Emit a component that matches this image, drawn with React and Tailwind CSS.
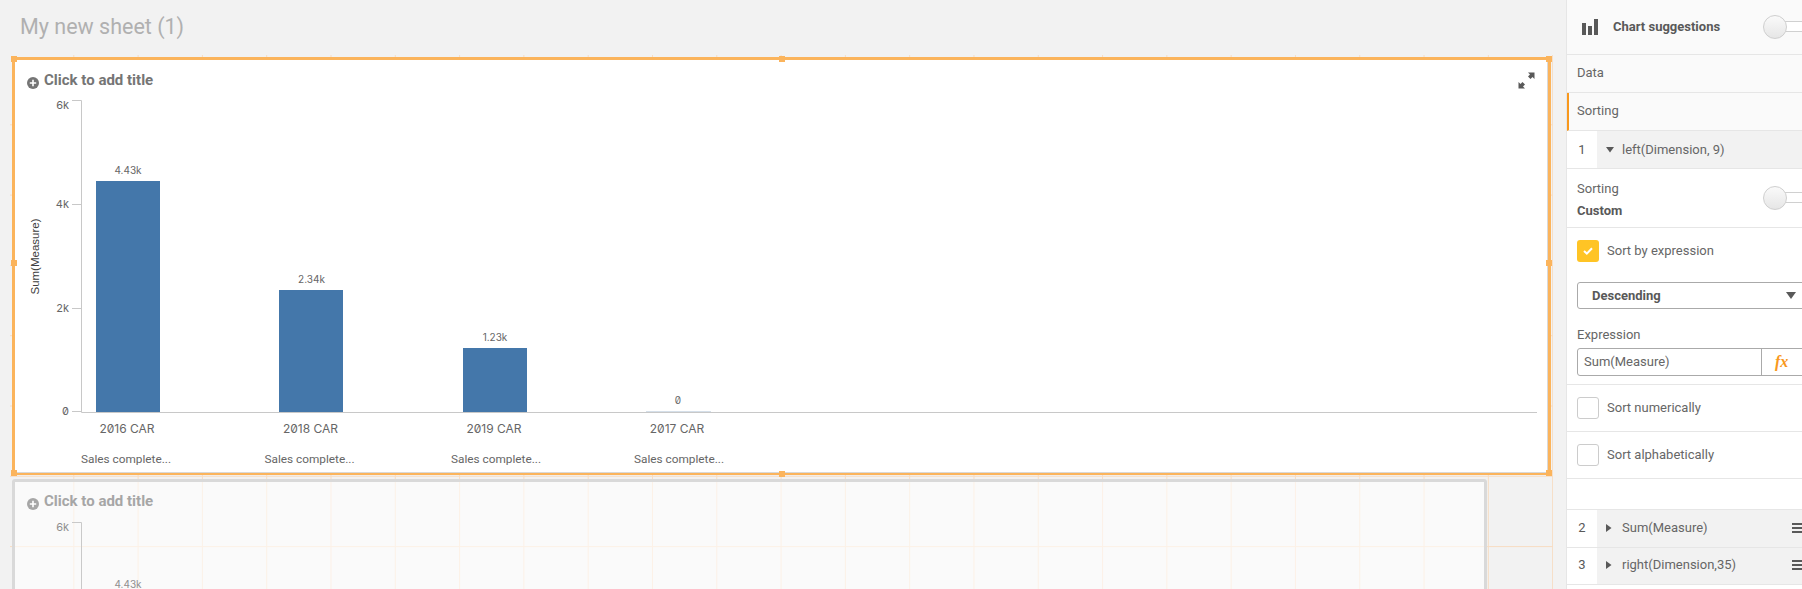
import React from "react";

const sans = "font-['Roboto',sans-serif]";

function Chart() {
  const axis = "#c8c8c8";
  const text = "#666666";
  const bars = [
    { x: 96, top: 181, label: "4.43k", year: "2016 CAR", cx: 128, sx: 126 },
    { x: 279, top: 290, label: "2.34k", year: "2018 CAR", cx: 311.5, sx: 309.5 },
    { x: 463, top: 348, label: "1.23k", year: "2019 CAR", cx: 495, sx: 496 },
  ];
  const ticks = [
    { y: 204, l: "4k" },
    { y: 308, l: "2k" },
    { y: 411, l: "0" },
  ];
  return (
    <svg viewBox="15 90 1533 382" width="1533" height="382" className="block slashed-zero font-['Inter',sans-serif]">
      <path d="M72 100.5H81.5V412.5H1537" fill="none" stroke={axis} strokeWidth="1" />
      {ticks.map((t) => (
        <g key={t.l}>
          <path d={`M72 ${t.y + 0.5}H81`} stroke={axis} />
          <text x="69" y={t.y + 4} textAnchor="end" fontSize="11" fill={text}>{t.l}</text>
        </g>
      ))}
      <text x="69" y="109" textAnchor="end" fontSize="11" fill={text}>6k</text>
      <text transform="rotate(-90 39 256.5)" x="39" y="256.5" textAnchor="middle" fontSize="11.5" fill="#404040" className="font-['Liberation_Sans',sans-serif]">Sum(Measure)</text>
      {bars.map((b) => (
        <g key={b.year}>
          <rect x={b.x} y={b.top} width="64" height={412 - b.top} fill="#4477aa" />
          <text x={b.cx} y={b.top - 7} textAnchor="middle" fontSize="10" fill={text}>{b.label}</text>
          <text x={b.cx - 1} y="433" textAnchor="middle" fontSize="12" fill={text}>{b.year}</text>
          <text x={b.sx} y="463" textAnchor="middle" fontSize="11.8" fill={text} className={sans}>Sales complete...</text>
        </g>
      ))}
      <rect x="646" y="411" width="65" height="1" fill="#d5dfe9" />
      <text x="678" y="404" textAnchor="middle" fontSize="10" fill={text}>0</text>
      <text x="677" y="433" textAnchor="middle" fontSize="12" fill={text}>2017 CAR</text>
      <text x="679" y="463" textAnchor="middle" fontSize="11.8" fill={text} className={sans}>Sales complete...</text>
    </svg>
  );
}

function FadedChart() {
  return (
    <svg viewBox="15 512 1467 77" width="1467" height="77" className="block slashed-zero font-['Inter',sans-serif]">
      <path d="M72 522.5H81.5V589" fill="none" stroke="#c9c9c9" strokeWidth="1" />
      <text x="69" y="531" textAnchor="end" fontSize="11" fill="#8f8f8f">6k</text>
      <text x="128" y="588" textAnchor="middle" fontSize="10" fill="#8f8f8f">4.43k</text>
    </svg>
  );
}

function PlusIcon({ color }) {
  return (
    <svg width="12" height="12" viewBox="0 0 12 12" className="mt-[2px] shrink-0">
      <circle cx="6" cy="6" r="6" fill={color} />
      <path d="M6 2.8V9.2M2.8 6H9.2" stroke="#fff" strokeWidth="1.6" />
    </svg>
  );
}

function CardTitle({ color, iconColor, height }) {
  return (
    <div className={`flex items-center gap-[5px] pl-[12px] ${height}`}>
      <PlusIcon color={iconColor} />
      <span className={`text-[15px] font-bold leading-none -mt-[3px] ${color}`}>Click to add title</span>
    </div>
  );
}

function Handle({ className }) {
  return <span className={`absolute h-[6px] w-[6px] bg-[#fbb45c] ${className}`} />;
}

function Toggle() {
  return (
    <div className="relative ml-auto h-[24px] w-[39px] shrink-0">
      <div className="absolute left-[12px] top-[6px] h-[11px] w-[40px] rounded-l-sm border border-[#d0d0d0] bg-white" />
      <div className="absolute left-0 top-0 h-[24px] w-[24px] rounded-full border border-[#cfcfcf] bg-gradient-to-b from-[#fafafa] to-[#e6e6e6]" />
    </div>
  );
}

function Check({ label }) {
  return (
    <div className="flex h-[47px] items-start border-b border-[#e6e6e6] pl-[10px] pt-[12px]">
      <div className="h-[22px] w-[22px] rounded-[3px] border border-[#cccccc] bg-white" />
      <span className="ml-[8px] text-[13px] leading-[22px] text-[#666666]">{label}</span>
    </div>
  );
}

function Row({ n, label, open, className }) {
  return (
    <div className={`flex items-stretch bg-[#f2f2f2] ${className}`}>
      <div className={`flex w-[30px] items-center justify-center bg-white text-[13px] text-[#595959] ${open ? "" : "pb-[2px]"}`}>{n}</div>
      <div className="flex w-[25px] items-center pl-[9px]">
        {open ? (
          <svg width="8" height="6" viewBox="0 0 8 6"><path d="M0 0H8L4 5.5Z" fill="#595959" /></svg>
        ) : (
          <svg width="6" height="8" viewBox="0 0 6 8" className="mb-[2px]"><path d="M0 0V8L5.5 4Z" fill="#595959" /></svg>
        )}
      </div>
      <span className={`self-center text-[13px] text-[#666666] ${open ? "" : "pb-[2px]"}`}>{label}</span>
      {!open && (
        <div className="ml-auto flex flex-col justify-center gap-[2px] pb-[2px]">
          <span className="h-[2px] w-[10px] bg-[#595959]" />
          <span className="h-[2px] w-[10px] bg-[#595959]" />
          <span className="h-[2px] w-[10px] bg-[#595959]" />
        </div>
      )}
    </div>
  );
}

export default function App() {
  return (
    <div className={`flex h-[589px] w-full overflow-hidden bg-[#f2f2f2] ${sans}`}>
      <main className="relative h-full w-[1566px] shrink-0 overflow-hidden">
        <div className="absolute bottom-0 left-[10px] top-[55px] w-[1543px] bg-[linear-gradient(to_right,transparent_calc(100%-1px),#f7dcc2_0),linear-gradient(to_bottom,transparent_calc(100%-1px),#f7dcc2_0)] bg-[length:64.3px_70.3px]" />
        <header className="relative flex h-[57px] items-start pl-[20px] pt-[10px]">
          <h1 className="text-[21.5px] font-normal leading-[34px] text-[#b0b0b0]">My new sheet (1)</h1>
        </header>
        <section className="relative z-10 ml-[12px] h-[418px] w-[1539px] border-x-[3px] border-b-[2px] border-t-[3px] border-[#fbb45c] bg-white shadow-[inset_-1px_-1px_0_#d9d9d9]">
          <CardTitle color="text-[#757575]" iconColor="#757575" height="h-[43px] -mb-[13px]" />
          <Chart />
          <svg width="17" height="17" viewBox="0 0 17 17" className="absolute left-[1503px] top-[12px]">
            <path d="M10 0.5H16.5V7L14.5 5L12.5 7L10 4.5L12 2.5Z M7 16.5H0.5V10L2.5 12L4.5 10L7 12.5L5 14.5Z" fill="#595959" />
          </svg>
          <Handle className="-left-[4px] -top-[4px]" />
          <Handle className="-left-[4px] top-[200px]" />
          <Handle className="-left-[4px] -bottom-[3px]" />
          <Handle className="left-[764px] -top-[4px]" />
          <Handle className="left-[764px] -bottom-[4px]" />
          <Handle className="-right-[4px] -top-[4px]" />
          <Handle className="-right-[4px] top-[200px]" />
          <Handle className="-right-[4px] -bottom-[3px]" />
        </section>
        <section className="relative z-0 ml-[12px] mt-[4px] h-[200px] w-[1475px] overflow-hidden rounded-[3px] border-[3px] border-[#d9d9d9] bg-white/60">
          <CardTitle color="text-[#a6a6a6]" iconColor="#a6a6a6" height="h-[42px] -mb-[12px]" />
          <FadedChart />
        </section>
      </main>

      <aside className="h-full w-[236px] shrink-0 overflow-hidden border-l border-[#e6e6e6] bg-white text-[13px] text-[#666666]">
        <div className="flex h-[55px] items-center border-b border-[#e6e6e6] bg-[#fafafa] pl-[15px]">
          <svg width="16" height="16" viewBox="0 0 16 16" className="shrink-0">
            <path d="M0 4H4V16H0Z M6 7H10V16H6Z M12 0H16V16H12Z" fill="#595959" />
          </svg>
          <span className="ml-[15px] text-[13px] font-bold text-[#595959]">Chart suggestions</span>
          <Toggle />
        </div>
        <div className="flex h-[38px] items-center border-b border-[#e6e6e6] bg-[#fafafa] pb-[1px] pl-[10px]">Data</div>
        <div className="flex h-[38px] items-center border-b border-l-2 border-[#e6e6e6] border-l-[#f8981d] bg-[#fafafa] pb-[1px] pl-[8px]">Sorting</div>
        <Row n="1" label="left(Dimension, 9)" open className="h-[38px] border-b border-[#e6e6e6]" />
        <div className="flex h-[59px] items-center border-b border-[#e6e6e6] pl-[10px]">
          <div className="mt-[3px] flex flex-col gap-[4px] leading-[18px]">
            <span>Sorting</span>
            <span className="font-bold text-[#595959]">Custom</span>
          </div>
          <Toggle />
        </div>
        <div className="h-[157px] border-b border-[#e6e6e6] pl-[10px] pt-[12px]">
          <div className="flex h-[22px] items-center">
            <div className="flex h-[22px] w-[22px] items-center justify-center rounded-[3px] bg-[#ffc425]">
              <svg width="10" height="8" viewBox="0 0 10 8"><path d="M1 4L3.8 6.6L9 1.2" fill="none" stroke="#fff" strokeWidth="2" /></svg>
            </div>
            <span className="ml-[8px]">Sort by expression</span>
          </div>
          <div className="mt-[20px] flex h-[27px] w-[240px] items-center rounded-[3px] border border-[#aaaaaa] pl-[14px] font-bold text-[#595959]">
            <span className="w-[194px]">Descending</span>
            <svg width="10" height="7" viewBox="0 0 10 7"><path d="M0 0H10L5 7Z" fill="#595959" /></svg>
          </div>
          <div className="mt-[17px] h-[18px] leading-[18px]">Expression</div>
          <div className="mt-[4px] flex h-[28px] w-[240px] items-center rounded-[3px] border border-[#aaaaaa]">
            <span className="w-[184px] border-r border-[#aaaaaa] pl-[6px] leading-[26px]">Sum(Measure)</span>
            <span className="pl-[13px] font-['Liberation_Serif',serif] text-[16px] font-bold italic text-[#f8981d]">fx</span>
          </div>
        </div>
        <Check label="Sort numerically" />
        <Check label="Sort alphabetically" />
        <div className="h-[30px]" />
        <Row n="2" label="Sum(Measure)" className="h-[39px] border-y border-[#e6e6e6]" />
        <Row n="3" label="right(Dimension,35)" className="h-[37px] border-b border-[#e6e6e6]" />
      </aside>
    </div>
  );
}
